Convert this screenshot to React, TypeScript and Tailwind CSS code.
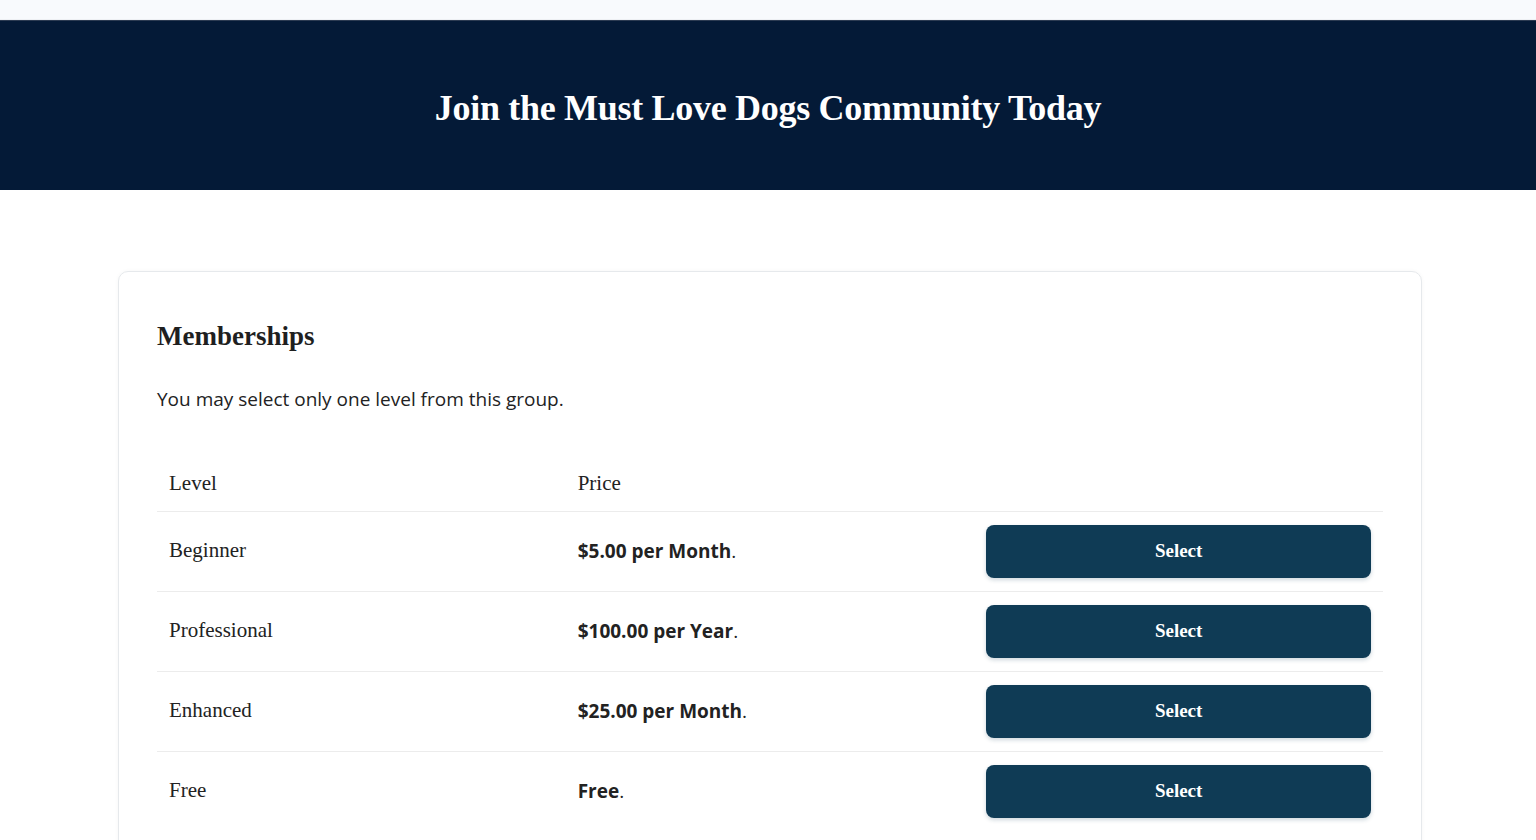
import React from 'react';

const levels = [
  { name: 'Beginner', price: '$5.00 per Month' },
  { name: 'Professional', price: '$100.00 per Year' },
  { name: 'Enhanced', price: '$25.00 per Month' },
  { name: 'Free', price: 'Free' },
];

const serif = "font-['Liberation_Serif',serif]";

export default function App() {
  return (
    <div className="min-h-screen bg-white font-['Open_Sans',sans-serif] text-[#222]">
      <div className="h-[20px] bg-[#f8fafd] border-b border-[#eef0f4]" />
      <header className="h-[170px] bg-[#041a37] border-t border-[#2c3b52] flex items-center justify-center pt-[4px]">
        <h1 className={`${serif} text-white text-[36px] font-bold tracking-[-0.3px]`}>
          Join the Must Love Dogs Community Today
        </h1>
      </header>

      <main className="pl-[118px] pr-[114px] pt-[81px]">
        <section className="rounded-[10px] border border-[#e6e9ec] shadow-[0_0_4px_rgba(0,0,0,0.04)] px-[38px] pt-[44px] pb-10">
          <h2 className={`${serif} text-[27px] font-bold text-[#1f1f1f]`}>Memberships</h2>
          <p className="mt-[28px] text-[19px] text-[#222]">You may select only one level from this group.</p>

          <table className="w-full mt-[36px] border-collapse">
            <thead>
              <tr className="border-b border-[#ececec]">
                <th className={`${serif} w-1/3 text-left font-normal text-[21px] px-3 pt-[19px] pb-[11px]`}>Level</th>
                <th className={`${serif} w-1/3 text-left font-normal text-[21px] px-3 pt-[19px] pb-[11px]`}>Price</th>
                <th className="w-1/3" />
              </tr>
            </thead>
            <tbody>
              {levels.map((l, i) => (
                <tr key={l.name} className={i < levels.length - 1 ? 'border-b border-[#ececec]' : ''}>
                  <td className={`${serif} text-[21px] px-3 py-[13px]`}>{l.name}</td>
                  <td className="text-[19px] px-3 py-[13px]">
                    <strong className="font-bold">{l.price}</strong>.
                  </td>
                  <td className="px-3 py-[13px]">
                    <button className={`${serif} w-full h-[53px] rounded-[8px] bg-[#0f3b55] text-white text-[19px] font-bold shadow-[0_2px_4px_rgba(15,59,85,0.2)]`}>
                      Select
                    </button>
                  </td>
                </tr>
              ))}
            </tbody>
          </table>
        </section>
      </main>
    </div>
  );
}
